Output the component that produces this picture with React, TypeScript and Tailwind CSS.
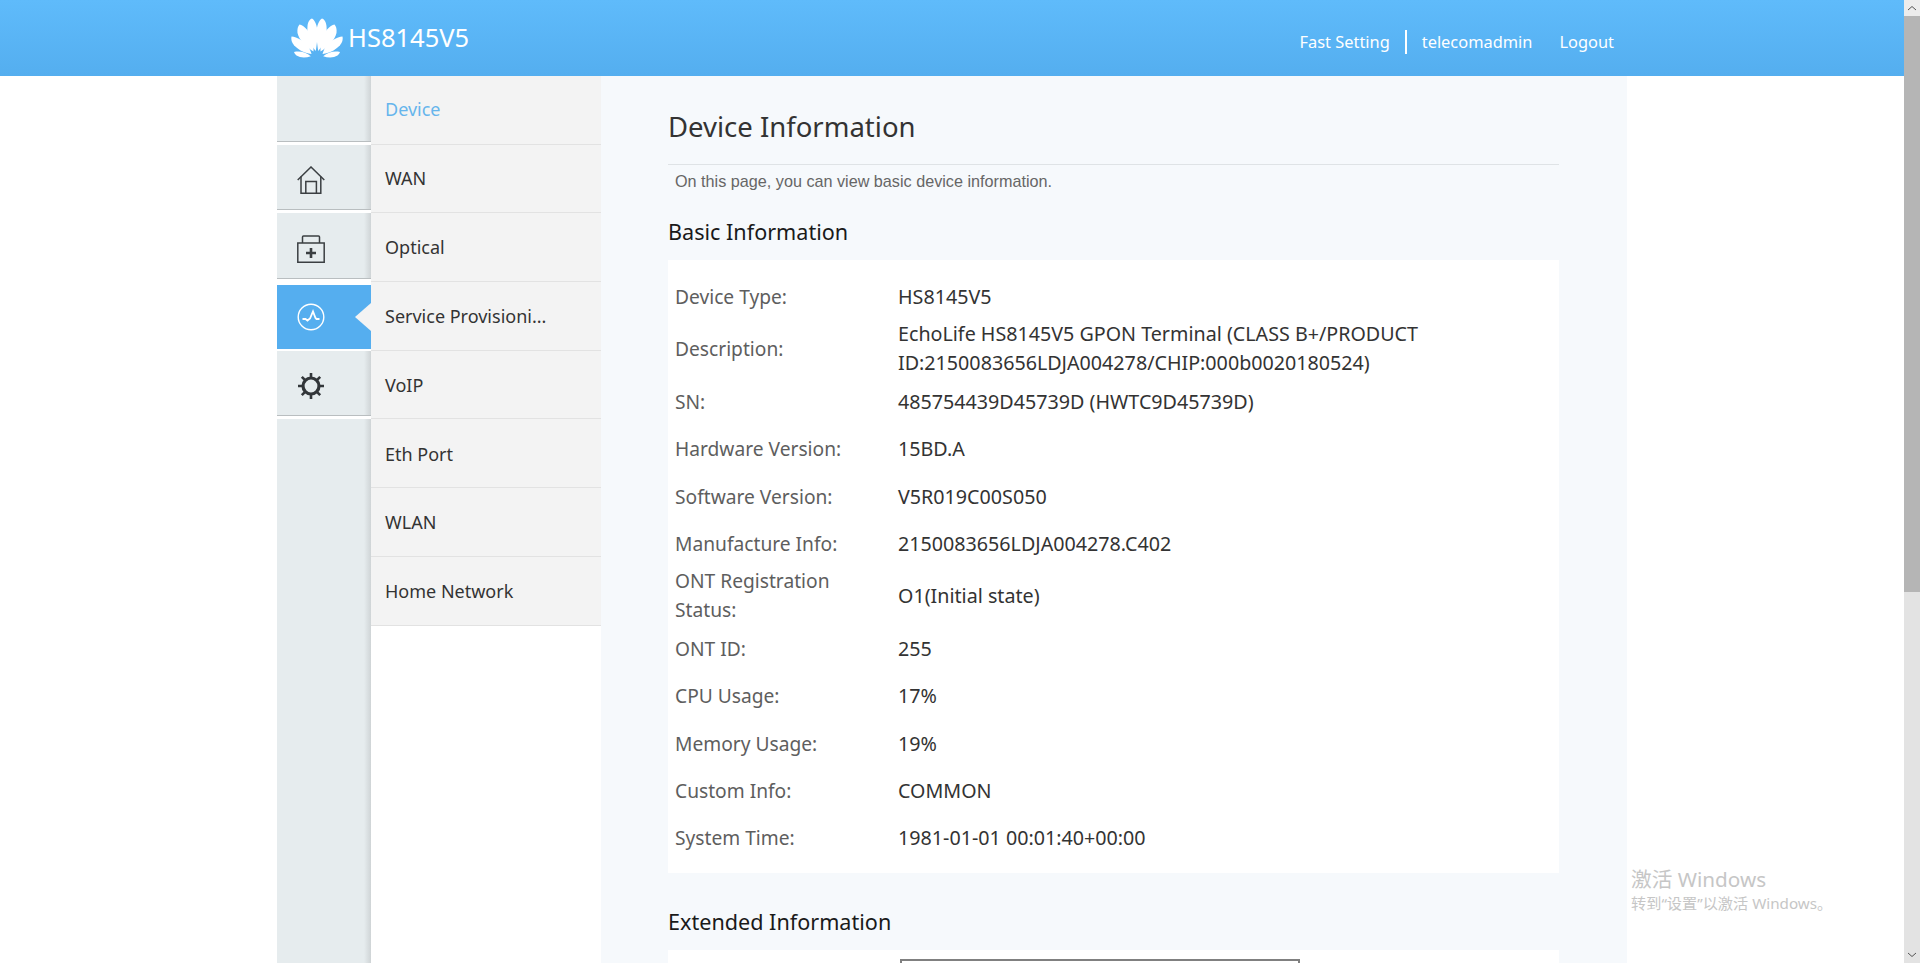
const MENU = ["Device", "WAN", "Optical", "Service Provisioni...", "VoIP", "Eth Port", "WLAN", "Home Network"];

const ROWS = [
  { label: "Device Type:", value: "HS8145V5" },
  {
    label: "Description:",
    value: "EchoLife HS8145V5 GPON Terminal (CLASS B+/PRODUCT\nID:2150083656LDJA004278/CHIP:000b0020180524)",
    tall: true,
  },
  { label: "SN:", value: "485754439D45739D (HWTC9D45739D)" },
  { label: "Hardware Version:", value: "15BD.A" },
  { label: "Software Version:", value: "V5R019C00S050" },
  { label: "Manufacture Info:", value: "2150083656LDJA004278.C402" },
  { label: "ONT Registration\nStatus:", value: "O1(Initial state)", tall: true },
  { label: "ONT ID:", value: "255" },
  { label: "CPU Usage:", value: "17%" },
  { label: "Memory Usage:", value: "19%" },
  { label: "Custom Info:", value: "COMMON" },
  { label: "System Time:", value: "1981-01-01 00:01:40+00:00" },
];

function Logo() {
  const petals = [
    "M24.8 33C19 27 15.5 17 16.5 8 17 3 19.5.8 21 .5 24 2 26.5 8 26.5 15 26.5 22 25.5 28 24.8 33Z",
    "M22.5 33.5C15 29 8 22 6.5 15 6 11 7 8 8.5 6.5 13 7.5 19 13 21 21 22.3 26 22.6 30 22.5 33.5Z",
    "M20.5 36C13 35 5 31 1.5 25 .5 23 0 21 .5 18.5 6 19 13.5 23 17.5 29 19 31.5 20 34 20.5 36Z",
    "M19.8 38.2C15 39.8 9.5 40 5.5 37.5 4.5 36.8 3.5 35.5 3 34 9 32.5 15.5 34.5 19.8 38.2Z",
  ];
  return (
    <svg viewBox="0 0 52 40" className="h-[40px] w-[52px] shrink-0" fill="#fff">
      {petals.map((d) => (
        <path key={d} d={d} />
      ))}
      <g transform="matrix(-1 0 0 1 52 0)">
        {petals.map((d) => (
          <path key={d} d={d} />
        ))}
      </g>
    </svg>
  );
}

function HomeIcon() {
  return (
    <svg viewBox="0 0 28 28" className="h-7 w-7" fill="none" stroke="#3b3f42" strokeWidth="1.5">
      <path d="M.7 14 14 1l13.3 13" />
      <path d="M4 10.5v16.7h19.8V10.5" />
      <path d="M8.8 27.2V15.5h10.6v11.7" />
    </svg>
  );
}

function MedicalIcon() {
  return (
    <svg viewBox="0 0 28 28" className="h-7 w-7" fill="none" stroke="#3b3f42" strokeWidth="1.5">
      <path d="M.8 8h26.4v19.2H.8z" />
      <path d="M5.5 8V2c0-.6.4-1 1-1h15c.6 0 1 .4 1 1v6" />
      <path d="M14 13v10M9 18h10" strokeWidth="2.6" />
    </svg>
  );
}

function PulseIcon() {
  return (
    <svg viewBox="0 0 28 28" className="h-7 w-7" fill="none" stroke="#fff">
      <circle cx="14" cy="14" r="12.8" strokeWidth="1.4" />
      <path d="M5.5 16h3l2 1.5 2.5-2L16 8.5l2.5 6.5 1 1h3" strokeWidth="1.8" />
    </svg>
  );
}

function GearIcon() {
  return (
    <svg viewBox="0 0 28 28" className="h-7 w-7" fill="none" stroke="#33373a">
      <circle cx="14" cy="14" r="8" strokeWidth="3.2" />
      <path
        d="M14 1v5M14 22v5M1 14h5M22 14h5M4.8 4.8l3.6 3.6M19.6 19.6l3.6 3.6M23.2 4.8l-3.6 3.6M8.4 19.6l-3.6 3.6"
        strokeWidth="2.6"
      />
    </svg>
  );
}

function IconRail() {
  const cells = [null, <HomeIcon />, <MedicalIcon />, <PulseIcon />, <GearIcon />];
  return (
    <div className="relative flex w-[94px] shrink-0 flex-col bg-[linear-gradient(to_right,#e6ecee_0,#e6ecee_87px,#cfd4d6_94px)]">
      {cells.map((icon, i) => (
        <div
          key={i}
          className={
            i === 3
              ? "flex h-[68.7px] items-center border-t-[3px] border-b-[2px] border-white bg-[#55aeef] pr-[26px] pl-[20px]"
              : "flex h-[68.7px] items-center border-b-[3px] border-b-white pt-[5px] pr-[26px] pl-[20px] shadow-[inset_0_-1px_0_#b9bec0]"
          }
        >
          {icon}
        </div>
      ))}
      <div className="absolute top-[227px] right-0 h-0 w-0 border-y-[14px] border-r-[16px] border-y-transparent border-r-[#f3f3f3]" />
    </div>
  );
}

function Menu() {
  return (
    <div className="w-[230px] shrink-0">
      {MENU.map((name, i) => (
        <div
          key={name}
          className={`flex h-[68.7px] items-center border-b border-[#e2e2e2] bg-[#f3f3f3] pl-[14px] text-[18px] ${
            i === 0 ? "text-[#66b5ec]" : i === 1 || i === 2 ? "text-[#333333]" : "pt-[2px] text-[#333333]"
          }`}
        >
          {name}
        </div>
      ))}
    </div>
  );
}

function Content() {
  return (
    <main className="min-w-0 flex-1 bg-[#f6f9fc] pr-[68px] pl-[67px]">
      <h1 className="flex h-[89px] items-center border-b border-[#dfe3e6] pt-[14px] text-[27.5px] font-normal text-[#333333]">
        Device Information
      </h1>
      <p className="flex h-[32px] items-center pl-[7px] font-['Liberation_Sans',sans-serif] text-[16.2px] text-[#666666]">
        On this page, you can view basic device information.
      </p>
      <h2 className="flex h-[63px] items-center pt-[7px] text-[21.6px] font-normal text-[#1a1a1a]">
        Basic Information
      </h2>
      <section className="bg-white pt-[12px] pb-[12px]">
        {ROWS.map((row) => (
          <div
            key={row.label}
            className={`grid grid-cols-[230px_1fr] items-center leading-[29px] ${
              row.tall ? "h-[58px]" : "h-[47.3px] pt-[1px]"
            }`}
          >
            <div className="whitespace-pre-line pl-[7px] text-[19.2px] text-[#5e5e5e]">{row.label}</div>
            <div className="whitespace-pre-line text-[19.7px] text-[#333333]">{row.value}</div>
          </div>
        ))}
      </section>
      <h2 className="flex h-[77px] items-center pt-[21px] text-[21.6px] font-normal text-[#1a1a1a]">
        Extended Information
      </h2>
      <section className="bg-white pt-[9px] pl-[232px]">
        <div className="h-[200px] w-[400px] border-2 border-[#808080] bg-white" />
      </section>
    </main>
  );
}

function Scrollbar() {
  return (
    <div className="flex h-full w-4 shrink-0 flex-col bg-[#e3e3e3]">
      <div className="flex h-4 items-center justify-center bg-[#ececec]">
        <svg viewBox="0 0 10 6" className="h-[6px] w-[10px]" fill="none" stroke="#555" strokeWidth="1">
          <path d="M1 5 5 1.5 9 5" />
        </svg>
      </div>
      <div className="h-[576px] bg-[#b5b5b5]" />
      <div className="flex-1" />
      <div className="flex h-4 items-center justify-center">
        <svg viewBox="0 0 10 6" className="h-[6px] w-[10px]" fill="none" stroke="#555" strokeWidth="1">
          <path d="M1 1 5 4.5 9 1" />
        </svg>
      </div>
    </div>
  );
}

export default function App() {
  return (
    <div className="relative flex h-screen overflow-hidden bg-white font-['Noto_Sans','Noto_Sans_CJK_SC',sans-serif]">
      <div className="min-w-0 flex-1">
        <header className="h-[76px] bg-[linear-gradient(to_bottom,#5fbbfb,#54aeef)]">
          <div className="mx-auto flex h-full w-[1350px] items-center justify-between pr-[13px] pl-[14px]">
            <div className="flex items-center gap-[5px] pb-[1px]">
              <Logo />
              <span className="text-[25.5px] text-white">HS8145V5</span>
            </div>
            <nav className="flex items-center pt-[8px] text-[16.4px] text-white">
              <span>Fast Setting</span>
              <span className="mx-[15px] h-[24px] w-[2px] bg-white" />
              <span>telecomadmin</span>
              <span className="ml-[27px]">Logout</span>
            </nav>
          </div>
        </header>
        <div className="mx-auto flex h-[887px] w-[1350px] overflow-hidden">
          <IconRail />
          <Menu />
          <Content />
        </div>
      </div>
      <Scrollbar />
      <div className="pointer-events-none absolute top-[865px] left-[1631px] text-[#c6c6c6]">
        <div className="text-[20.7px] leading-[28px]">激活 Windows</div>
        <div className="text-[15.2px] leading-[20px]">转到“设置”以激活 Windows。</div>
      </div>
    </div>
  );
}
